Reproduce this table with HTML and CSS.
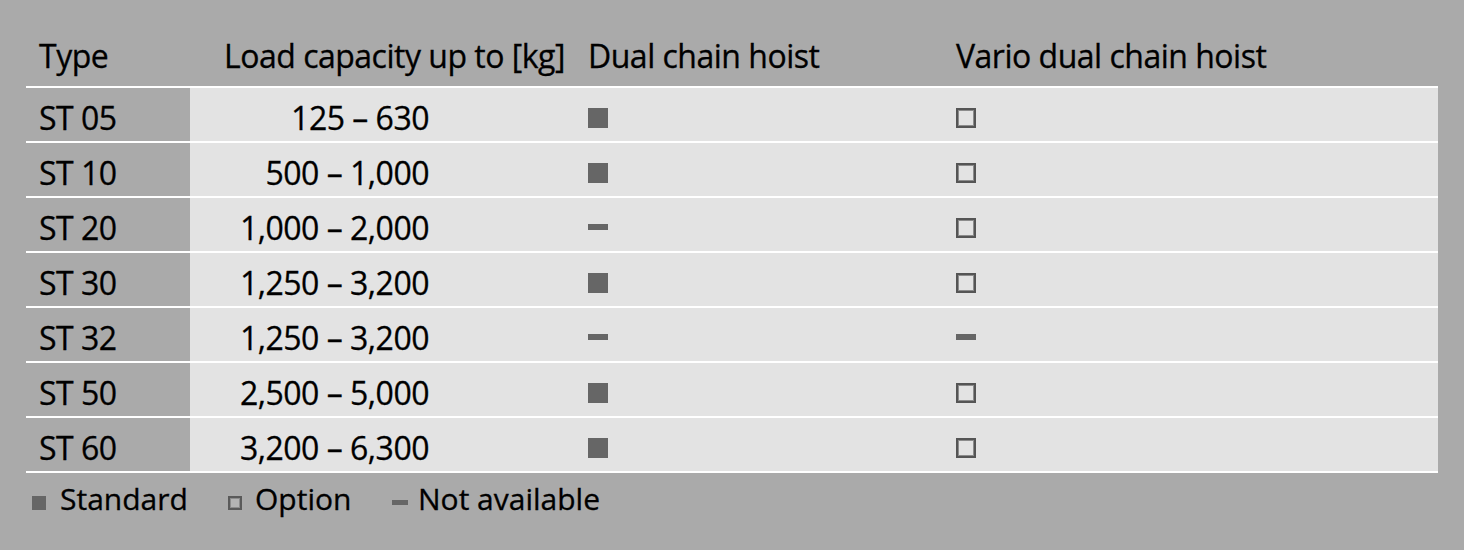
FILE: index.html
```html
<!DOCTYPE html>
<html lang="en">
<head>
<meta charset="utf-8">
<title>Chain hoist types</title>
<link rel="stylesheet" href="styles.css">
</head>
<body>
<div class="page">
  <div class="table">
    <div class="row head">
      <div class="cell c-type">Type</div>
      <div class="cell c-load">Load capacity up to [kg]</div>
      <div class="cell c-dual">Dual chain hoist</div>
      <div class="cell c-vario">Vario dual chain hoist</div>
    </div>
    <div class="row body">
      <div class="cell c-type">ST 05</div>
      <div class="cell c-load">125 – 630</div>
      <div class="cell c-dual"><span class="mk std"></span></div>
      <div class="cell c-vario"><span class="mk opt"></span></div>
    </div>
    <div class="row body">
      <div class="cell c-type">ST 10</div>
      <div class="cell c-load">500 – 1,000</div>
      <div class="cell c-dual"><span class="mk std"></span></div>
      <div class="cell c-vario"><span class="mk opt"></span></div>
    </div>
    <div class="row body">
      <div class="cell c-type">ST 20</div>
      <div class="cell c-load">1,000 – 2,000</div>
      <div class="cell c-dual"><span class="mk na"></span></div>
      <div class="cell c-vario"><span class="mk opt"></span></div>
    </div>
    <div class="row body">
      <div class="cell c-type">ST 30</div>
      <div class="cell c-load">1,250 – 3,200</div>
      <div class="cell c-dual"><span class="mk std"></span></div>
      <div class="cell c-vario"><span class="mk opt"></span></div>
    </div>
    <div class="row body">
      <div class="cell c-type">ST 32</div>
      <div class="cell c-load">1,250 – 3,200</div>
      <div class="cell c-dual"><span class="mk na"></span></div>
      <div class="cell c-vario"><span class="mk na"></span></div>
    </div>
    <div class="row body">
      <div class="cell c-type">ST 50</div>
      <div class="cell c-load">2,500 – 5,000</div>
      <div class="cell c-dual"><span class="mk std"></span></div>
      <div class="cell c-vario"><span class="mk opt"></span></div>
    </div>
    <div class="row body last">
      <div class="cell c-type">ST 60</div>
      <div class="cell c-load">3,200 – 6,300</div>
      <div class="cell c-dual"><span class="mk std"></span></div>
      <div class="cell c-vario"><span class="mk opt"></span></div>
    </div>
  </div>
  <div class="legend">
    <span class="item"><span class="lm lstd"></span>Standard</span>
    <span class="item"><span class="lm lopt"></span>Option</span>
    <span class="item"><span class="lm lna"></span>Not available</span>
  </div>
</div>
</body>
</html>
```
FILE: styles.css
```css
html, body {
  margin: 0;
  padding: 0;
  background: #aaaaaa;
}
body {
  font-family: "Open Sans", "Liberation Sans", Arial, sans-serif;
  font-weight: 400;
  -webkit-text-stroke: 0.3px #000;
  color: #000;
  width: 1464px;
  height: 550px;
  overflow: hidden;
}
.page {
  padding-left: 26px;
}
.table {
  width: 1412px;
}
.row {
  display: grid;
  grid-template-columns: 164px 398px 368px 482px;
  font-size: 32px;
  line-height: 36px;
  letter-spacing: -0.5px;
}
.head .cell {
  padding-top: 38px;
  padding-bottom: 12px;
  white-space: nowrap;
}
.head .c-load {
  padding-left: 34px;
}
.body {
  border-top: 2px solid #ffffff;
}
.body.last {
  border-bottom: 2px solid #ffffff;
}
.body .cell {
  height: 53px;
  box-sizing: border-box;
  padding-top: 12px;
  background: #e3e3e3;
}
.body .c-type {
  background: transparent;
}
.c-type {
  padding-left: 13px;
}
.body .c-load {
  text-align: right;
  padding-right: 159px;
}
.mk {
  display: block;
  width: 20px;
}
.mk.std {
  height: 20px;
  margin-top: 8px;
  background: #666666;
}
.mk.opt {
  height: 20px;
  margin-top: 8px;
  box-sizing: border-box;
  border: 2px solid #555555;
  box-shadow: inset 0 0 0 1px #8c8c8c;
  background: #e3e3e3;
}
.mk.na {
  height: 6px;
  margin-top: 14px;
  background: #666666;
}
.legend {
  display: grid;
  grid-template-columns: 196px 161px auto;
  padding-top: 9px;
  padding-left: 6px;
  font-size: 30px;
  line-height: 34px;
  letter-spacing: 0;
}
.item {
  white-space: nowrap;
}
.lm {
  display: inline-block;
  vertical-align: baseline;
  margin-right: 14px;
}
.lstd {
  width: 14px;
  height: 14px;
  background: #666666;
}
.lopt {
  width: 14px;
  height: 14px;
  margin-right: 13px;
  box-sizing: border-box;
  border: 2px solid #5a5a5a;
  box-shadow: inset 0 0 0 1px #8c8c8c;
  background: #b4b4b4;
}
.lna {
  width: 16px;
  height: 5px;
  vertical-align: 5px;
  margin-left: 3px;
  margin-right: 10px;
  background: #666666;
}
```
